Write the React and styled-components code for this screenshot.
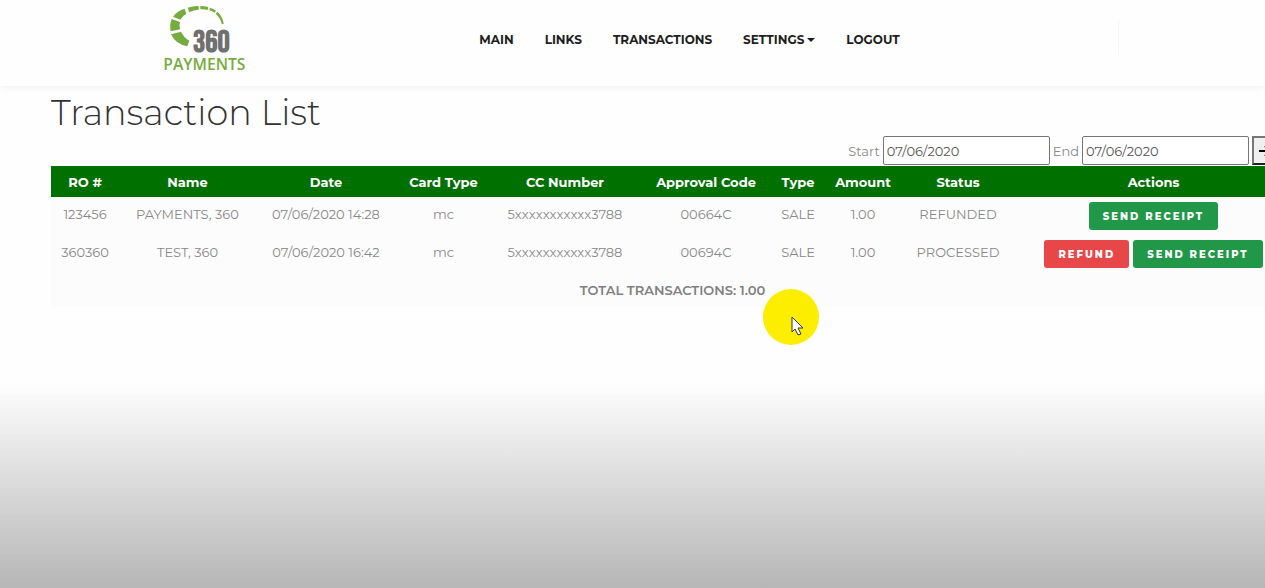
import React from 'react';

import styled, { createGlobalStyle } from 'styled-components';

const GlobalStyle = createGlobalStyle`
  * {
    box-sizing: border-box;
  }

  body {
    margin: 0;
    min-height: 100vh;
    overflow-x: hidden;
    background: linear-gradient(to bottom, #fefefe 65%, #b6b6b6 100%) no-repeat;
    color: #888;
    font-family: Montserrat, Inter, sans-serif;
    font-size: 13px;
    line-height: 24px;
  }
`;

const Page = styled.div`
  position: relative;
`;

const Header = styled.header`
  display: flex;
  align-items: center;
  justify-content: space-between;
  height: 86px;
  padding: 0 146px 10px 164px;
  background: #fefefe;
  box-shadow: 0 2px 8px rgba(0, 0, 0, 0.05);
`;

const Brand = styled.a`
  svg {
    display: block;
    overflow: visible;
  }
`;

const Nav = styled.nav`
  display: flex;
  gap: 31px;
  padding: 4px 0 0 16px;
`;

const NavLink = styled.a`
  display: flex;
  align-items: center;
  color: #1e1e1e;
  font-size: 12px;
  font-weight: 700;
  text-decoration: none;

  &:hover {
    opacity: 0.8;
  }
`;

const Caret = styled.span`
  margin-left: 3px;
  border-top: 4px solid #1e1e1e;
  border-right: 4px solid transparent;
  border-left: 4px solid transparent;
`;

const Divider = styled.span`
  width: 1px;
  height: 34px;
  background: #f4f4f4;
`;

const Main = styled.main`
  margin: 0 -29px 0 51px;
`;

const Title = styled.h1`
  margin: 0;
  padding: 5px 0 1px;
  color: #333;
  font-size: 35px;
  font-weight: 300;
  line-height: 44px;
`;

const Filter = styled.form`
  display: flex;
  align-items: center;
  justify-content: flex-end;
  gap: 3px;
  padding: 0 16px 1px 0;

  label {
    color: #888;
  }
`;

const DateInput = styled.input`
  width: 167px;
  height: 29px;
  padding: 0 3px;
  border: 1px solid #767676;
  border-radius: 2px;
  background: #fff;
  color: #555;
  font: inherit;
`;

const GoButton = styled.button`
  display: flex;
  align-items: center;
  height: 29px;
  padding: 0 4px;
  border: 2px outset #767676;
  background: #efefef;
  color: #000;
`;

const Table = styled.table`
  width: 100%;
  border-collapse: collapse;
  table-layout: fixed;
  background: #fcfcfd;
  text-align: center;

  td {
    padding: 5px 0;
    vertical-align: top;
  }
`;

const Col = styled.col`
  width: ${(props) => props.$width}px;
`;

const HeadCell = styled.th`
  height: 31px;
  padding: 0;
  background: #007000;
  color: #fff;
  font-weight: 700;
`;

const TotalCell = styled.td`
  color: #808080;
  font-weight: 600;
`;

const Actions = styled.div`
  display: flex;
  justify-content: center;
  gap: 4px;
`;

const ActionButton = styled.button`
  height: 28px;
  padding: 0 14px;
  border: 0;
  border-radius: 3px;
  background: ${(props) => (props.$danger ? '#e8474a' : '#219748')};
  color: #fff;
  font-family: inherit;
  font-size: 10px;
  font-weight: 800;
  letter-spacing: 2px;
`;

const Highlight = styled.div`
  position: absolute;
  top: 289px;
  left: 763px;
  width: 56px;
  height: 56px;
  border-radius: 50%;
  background: #fdee00;
  pointer-events: none;

  svg {
    position: absolute;
    top: 27px;
    left: 28px;
  }
`;

const columns = [
  { label: 'RO #', width: 68 },
  { label: 'Name', width: 137 },
  { label: 'Date', width: 140 },
  { label: 'Card Type', width: 95 },
  { label: 'CC Number', width: 148 },
  { label: 'Approval Code', width: 134 },
  { label: 'Type', width: 50 },
  { label: 'Amount', width: 80 },
  { label: 'Status', width: 110 },
  { label: 'Actions', width: 281 },
];

const transactions = [
  {
    values: ['123456', 'PAYMENTS, 360', '07/06/2020 14:28', 'mc', '5xxxxxxxxxxx3788', '00664C', 'SALE', '1.00', 'REFUNDED'],
    refundable: false,
  },
  {
    values: ['360360', 'TEST, 360', '07/06/2020 16:42', 'mc', '5xxxxxxxxxxx3788', '00694C', 'SALE', '1.00', 'PROCESSED'],
    refundable: true,
  },
];

const Logo = () => (
  <svg width="81" height="67" viewBox="42 15 243 201" role="img" aria-label="360 Payments">
    <g fill="#76ac3f">
      <path d="M63 103L93 95Q101 112 118 122L112 139Q78 134 63 103Z" />
      <path d="M62 94Q58 75 65 57L90 66Q86 78 91 88Z" />
      <path d="M69 50Q82 32 104 26L109 41Q97 48 91 59Z" />
      <path d="M113 23Q130 17 146 18V29Q130 30 118 37Z" />
      <path d="M151 18Q164 18 175 21L173 30Q162 27 151 28Z" />
      <path d="M180 23Q190 26 198 32L194 38Q187 34 178 31Z" />
      <path d="M202 35Q219 50 221 72L216 73Q211 53 197 41Z" />
    </g>
    <text x="184" y="157" textAnchor="middle" fill="#707070" fontFamily="'Bebas Neue', Oswald, sans-serif" fontSize="92" fontWeight="700">
      360
    </text>
    <text x="163" y="210" textAnchor="middle" fill="#76ac3f" fontFamily="'Open Sans', sans-serif" fontSize="47" fontWeight="600">
      PAYMENTS
    </text>
  </svg>
);

const App = () => (
  <Page>
    <GlobalStyle />
    <Header>
      <Brand href="#main">
        <Logo />
      </Brand>
      <Nav>
        <NavLink href="#main">MAIN</NavLink>
        <NavLink href="#links">LINKS</NavLink>
        <NavLink href="#transactions">TRANSACTIONS</NavLink>
        <NavLink href="#settings">
          SETTINGS
          <Caret />
        </NavLink>
        <NavLink href="#logout">LOGOUT</NavLink>
      </Nav>
      <Divider />
    </Header>
    <Main>
      <Title>Transaction List</Title>
      <Filter>
        <label htmlFor="start">Start</label>
        <DateInput id="start" type="text" defaultValue="07/06/2020" />
        <label htmlFor="end">End</label>
        <DateInput id="end" type="text" defaultValue="07/06/2020" />
        <GoButton type="button" aria-label="Go">
          <svg width="14" height="12" viewBox="0 0 14 12" fill="none" stroke="#000" strokeWidth="2">
            <path d="M1 6H13M7 1L12 6L7 11" />
          </svg>
        </GoButton>
      </Filter>
      <Table>
        <colgroup>
          {columns.map((column) => (
            <Col key={column.label} $width={column.width} />
          ))}
        </colgroup>
        <thead>
          <tr>
            {columns.map((column) => (
              <HeadCell key={column.label}>{column.label}</HeadCell>
            ))}
          </tr>
        </thead>
        <tbody>
          {transactions.map((transaction) => (
            <tr key={transaction.values[0]}>
              {transaction.values.map((value, i) => (
                <td key={columns[i].label}>{value}</td>
              ))}
              <td>
                <Actions>
                  {transaction.refundable && <ActionButton $danger>REFUND</ActionButton>}
                  <ActionButton>SEND RECEIPT</ActionButton>
                </Actions>
              </td>
            </tr>
          ))}
          <tr>
            <TotalCell colSpan={columns.length}>TOTAL TRANSACTIONS: 1.00</TotalCell>
          </tr>
        </tbody>
      </Table>
    </Main>
    <Highlight>
      <svg width="14" height="20" viewBox="0 0 14 20" fill="#fff" stroke="#333" strokeWidth="1">
        <path d="M1 1V16L4 13L7 19L10 18L7 12H12Z" />
      </svg>
    </Highlight>
  </Page>
);

export default App;
